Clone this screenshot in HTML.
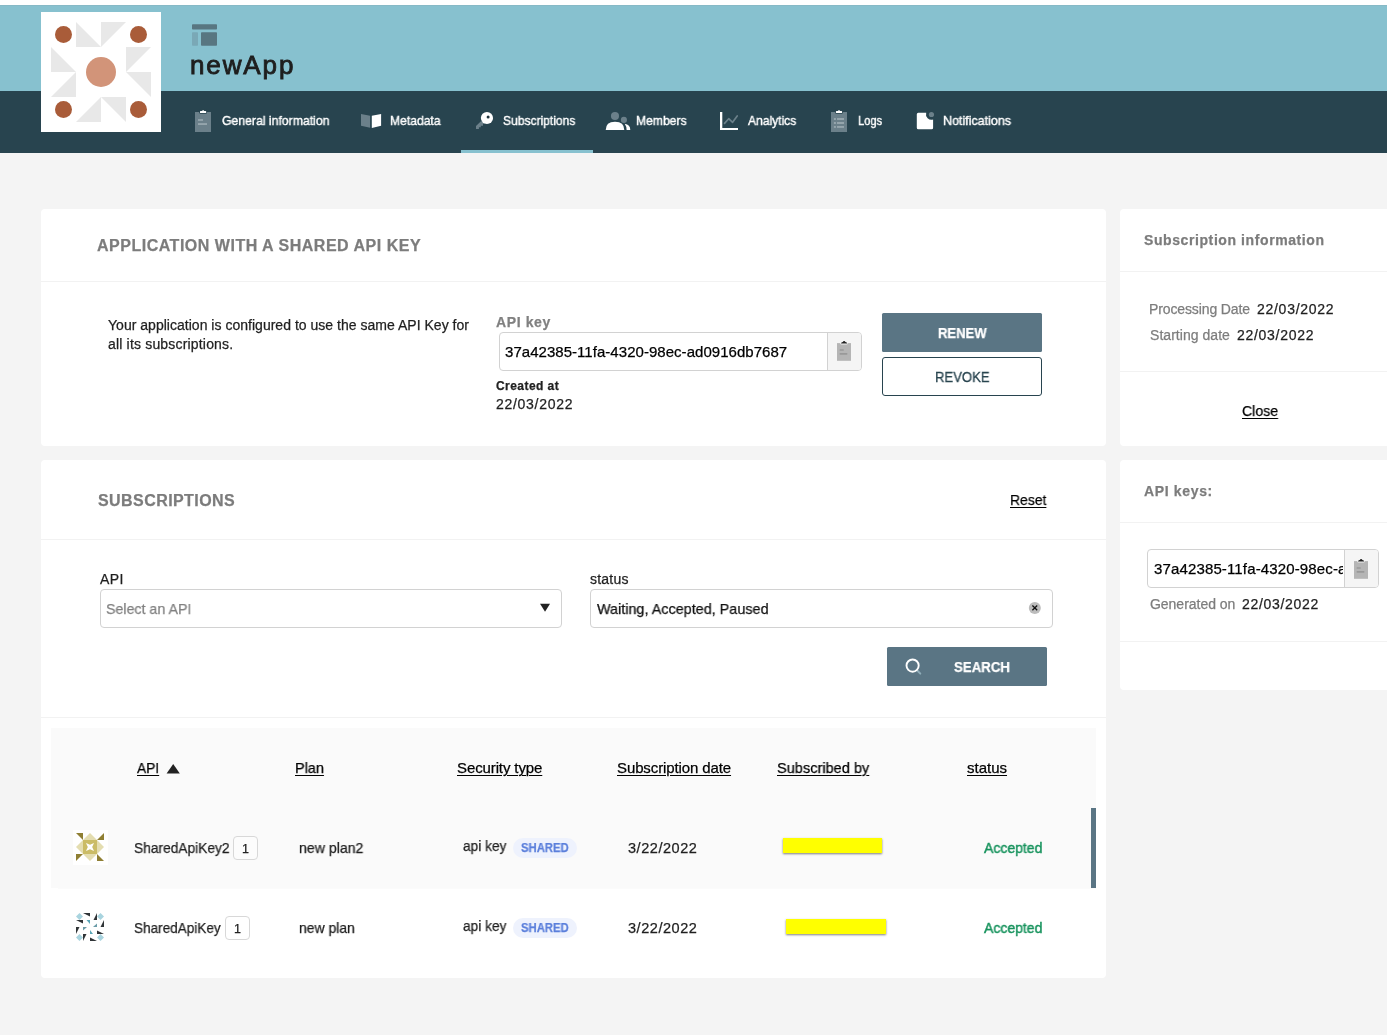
<!DOCTYPE html>
<html lang="en">
<head>
<meta charset="utf-8">
<title>newApp - Subscriptions</title>
<style>
*{box-sizing:border-box;margin:0;padding:0}
html,body{width:1387px;height:1035px;overflow:hidden;background:#f4f4f4;font-family:"Liberation Sans",sans-serif;color:#1f1f1f}
body{position:relative}
.abs{position:absolute}
.t{position:absolute;white-space:nowrap;line-height:1;font-size:14px;will-change:transform;-webkit-text-stroke:.25px}
.sx{transform-origin:0 50%}
.u{text-decoration:underline;text-decoration-thickness:1px;text-underline-offset:2px}
.card{background:#fff;border-radius:4px}
.hr{height:1px;background:#f2f2f2}
.inp{border:1px solid #d2d2d2;border-radius:4px;background:#fff}
.btnp{background:#5a7584;border-radius:1.500px}
.btno{background:#fff;border:1px solid #28444f;border-radius:3px}
.clip{background:#f5f5f5;border-left:1px solid #d2d2d2;border-radius:0 3px 3px 0}
.badge{border:1px solid #d8d8d8;border-radius:4px;background:#fcfcfc}
.shared{background:#eef2fd;border-radius:10px}
.yellow{background:#ffff00;box-shadow:0 1px 2px rgba(0,0,0,.5)}
</style>
</head>
<body>
<div class="abs" style="left:0;top:0;width:1387px;height:5px;background:#fff"></div>
<div class="abs" style="left:0;top:5px;width:1387px;height:86px;background:#87c1cf"></div>
<div class="abs" style="left:0;top:5px;width:1387px;height:1px;background:#86b9c6"></div>
<div class="abs" style="left:0;top:91px;width:1387px;height:62px;background:#28444f"></div>
<div class="abs" style="left:461px;top:150px;width:132px;height:3px;background:#87c1cf"></div>

<div class="abs" style="left:41px;top:12px;width:120px;height:120px;background:#fff">
<svg width="120" height="120" viewBox="0 0 120 120">
<g fill="#e8e8e8">
<polygon points="35,10 35,35 60,35"/>
<polygon points="60,10 85,10 60,35"/>
<polygon points="85,35 110,35 85,60"/>
<polygon points="85,60 110,60 110,85"/>
<polygon points="60,85 85,85 85,110"/>
<polygon points="60,85 60,110 35,110"/>
<polygon points="10,85 35,60 35,85"/>
<polygon points="10,35 10,60 35,60"/>
</g>
<g fill="#a95c39">
<circle cx="22.500" cy="22.500" r="8.500"/>
<circle cx="97.500" cy="22.500" r="8.500"/>
<circle cx="22.500" cy="97.500" r="8.500"/>
<circle cx="97.500" cy="97.500" r="8.500"/>
</g>
<circle cx="60" cy="60" r="15" fill="#d29479"/>
</svg>
</div>

<!-- app icon -->
<svg class="abs" style="left:191px;top:23px" width="28" height="24" viewBox="0 0 28 24">
<rect x="1" y="1.200" width="25" height="5.400" rx=".8" fill="#587681"/>
<rect x="1" y="9.200" width="6" height="13.600" rx=".8" fill="#7aa8b6"/>
<rect x="10" y="9.200" width="16" height="13.600" rx=".8" fill="#587681"/>
</svg>

<svg class="abs" style="left:0;top:100px" width="1387" height="40" viewBox="0 100 1387 40">
<!-- general information: clipboard -->
<rect x="195" y="112" width="16" height="20" fill="#6b808a"/>
<rect x="199.200" y="109.600" width="7.800" height="4.200" rx="1.200" fill="#28444f"/>
<path d="M200 113.100v-1.600q0-.6.600-.6h1.600q.3-.9.900-.9t.9.900h1.600q.6 0 .6.600v1.600z" fill="#fff"/>
<rect x="198" y="119.100" width="5" height="1.800" fill="#95a5ac"/>
<rect x="198" y="123.100" width="9" height="1.900" fill="#95a5ac"/>
<!-- metadata: book -->
<polygon points="361,113.900 370.100,115.700 370.100,127.800 361,125.700" fill="#6b808a"/>
<polygon points="371.800,115.800 381.100,113.900 381.100,125.700 371.800,127.900" fill="#fff"/>
<!-- subscriptions: key -->
<polygon points="481.200,120.900 476,126.100 476,128.900 478.900,128.900 478.900,127.300 480.800,127.300 480.800,125.700 483,125.700 483,124 485.500,123.500" fill="#6b808a"/>
<circle cx="486.950" cy="118" r="6.100" fill="#fff"/>
<circle cx="488.100" cy="117" r="1.500" fill="#1f333c"/>
<!-- members -->
<circle cx="615" cy="116.050" r="4.050" fill="#6b808a"/>
<circle cx="623.900" cy="119.900" r="3.050" fill="#6b808a"/>
<path d="M624.200 130.050h6.100q0-5.400-5.600-6.200q1.900 2.600 1.900 6.200z" fill="#fff"/>
<path d="M605.700 130.050q0-8.350 9.300-8.350t9.300 8.350z" fill="#fff"/>
<!-- analytics -->
<path d="M720 112.100h2.300v15.800h15.700v2.050h-18z" fill="#fff"/>
<polyline points="724.500,123.400 728.700,118.700 732.600,122.300 737.200,116" fill="none" stroke="#6b808a" stroke-width="1.700" stroke-linecap="round" stroke-linejoin="round"/>
<!-- logs -->
<rect x="831" y="112" width="16" height="20" fill="#6b808a"/>
<rect x="835.100" y="109.600" width="7.800" height="4.200" rx="1.200" fill="#28444f"/>
<path d="M835.900 113.100v-1.600q0-.6.600-.6h1.600q.3-.9.900-.9t.9.900h1.600q.6 0 .6.600v1.600z" fill="#fff"/>
<g fill="#95a5ac">
<rect x="833.900" y="118" width="2" height="2"/><rect x="837" y="118" width="7" height="2"/>
<rect x="833.900" y="122" width="2" height="2"/><rect x="837" y="122" width="7" height="2"/>
<rect x="833.900" y="126" width="2" height="1.900"/><rect x="837" y="126" width="7" height="1.900"/>
</g>
<!-- notifications -->
<path d="M918.300 112.750h7.900a5.500 5.500 0 0 0 6.900 6.800v8.150q0 1.500-1.500 1.500h-13.300q-1.500 0-1.500-1.500v-13.450q0-1.500 1.500-1.500z" fill="#fff"/>
<circle cx="931.450" cy="114.500" r="2.600" fill="#6b808a"/>
</svg>


<!-- card 1 -->
<div class="abs card" style="left:41px;top:209px;width:1065px;height:237px"></div>
<div class="abs hr" style="left:41px;top:281px;width:1065px"></div>
<div class="abs inp" style="left:499px;top:332px;width:363px;height:39px"></div>
<div class="abs clip" style="left:827px;top:333px;width:34px;height:37px"></div>
<div class="abs btnp" style="left:882px;top:313px;width:160px;height:39px"></div>
<div class="abs btno" style="left:882px;top:357px;width:160px;height:39px"></div>

<!-- card 2 -->
<div class="abs card" style="left:41px;top:460px;width:1065px;height:518px"></div>
<div class="abs hr" style="left:41px;top:539px;width:1065px"></div>
<div class="abs inp" style="left:100px;top:589px;width:462px;height:39px"></div>
<svg class="abs" style="left:539px;top:603px" width="12" height="10" viewBox="0 0 12 10"><polygon points="1,0.800 11,0.800 6,8.800" fill="#222"/></svg>
<div class="abs inp" style="left:590px;top:589px;width:463px;height:39px"></div>
<svg class="abs" style="left:1028px;top:601px" width="14" height="14" viewBox="0 0 14 14"><circle cx="6.800" cy="6.900" r="6" fill="#bcbcbc"/><path d="M4.400 4.500L9.200 9.300M9.200 4.500L4.400 9.300" stroke="#111" stroke-width="1.250"/></svg>
<div class="abs btnp" style="left:887px;top:647px;width:160px;height:39px"></div>
<svg class="abs" style="left:904px;top:657px" width="20" height="20" viewBox="0 0 20 20"><path d="M13 13.200L16.300 16.600" stroke="#8eacb8" stroke-width="2" stroke-linecap="round"/><circle cx="8.600" cy="8.600" r="6.100" fill="none" stroke="#fff" stroke-width="1.900"/></svg>
<div class="abs hr" style="left:41px;top:717px;width:1065px"></div>

<!-- table -->
<div class="abs" style="left:51px;top:728px;width:1045px;height:160px;background:#fafafa"></div>
<div class="abs" style="left:58px;top:888px;width:1038px;height:1px;background:#fbfbfb"></div>
<div class="abs" style="left:1091px;top:807.500px;width:5px;height:80px;background:#5a7584"></div>
<svg class="abs" style="left:166px;top:763px" width="14" height="11" viewBox="0 0 14 11"><polygon points="7.200,1 13.800,10.600 0.600,10.600" fill="#222"/></svg>

<!-- row 1 -->
<svg class="abs" style="left:73px;top:830px" width="35" height="35" viewBox="-3 -3 35 35">
<rect x="-3" y="-3" width="35" height="35" fill="#fff"/>
<polygon points="14,0 28,14 14,28 0,14" fill="#e4ddb0"/>
<rect x="7" y="7" width="14" height="14" fill="#cbbc66"/>
<g fill="#8f7f33"><polygon points="0,0 7,0 7,7"/><polygon points="28,0 28,7 21,7"/><polygon points="0,21 7,21 0,28"/><polygon points="21,21 21,28 28,28"/></g>
<polygon points="10,10 14,11.800 18,10 16.200,14 18,18 14,16.200 10,18 11.800,14" fill="#fff"/>
</svg>
<div class="abs badge" style="left:233px;top:836px;width:25px;height:24px"></div>
<div class="t" style="left:241.500px;top:842.500px;font-size:12.500px;color:#222">1</div>
<div class="abs shared" style="left:513px;top:838px;width:64px;height:19.500px"></div>
<div class="abs yellow" style="left:782.500px;top:838px;width:99px;height:15px"></div>

<!-- row 2 -->
<svg class="abs" style="left:76px;top:913px" width="28" height="28" viewBox="0 0 28 28">
<g fill="#a9d4df"><polygon points="3.500,0 7,3.500 3.500,7 0,3.500"/><polygon points="24.500,0 28,3.500 24.500,7 21,3.500"/><polygon points="3.500,21 7,24.500 3.500,28 0,24.500"/><polygon points="24.500,21 28,24.500 24.500,28 21,24.500"/></g>
<g fill="#303437"><polygon points="7,0 14,0 14,3.500"/><polygon points="21,0 21,7 17.500,7"/><polygon points="0,7 7,7 7,10.500"/><polygon points="28,7 28,14 24.500,14"/><polygon points="0,14 3.500,14 0,21"/><polygon points="21,17.500 21,21 28,21"/><polygon points="7,21 10.500,21 7,28"/><polygon points="14,24.500 14,28 21,28"/></g>
<g fill="#5aa6b8"><polygon points="10.500,7 14,7 14,11"/><polygon points="14,17 14,21 17,21"/></g>
<g fill="#6b9ca8"><polygon points="21,10.500 21,14 17,14"/><polygon points="7,14 11,14 7,17.500"/></g>
</svg>
<div class="abs badge" style="left:225px;top:916px;width:25px;height:24px;background:#fff"></div>
<div class="t" style="left:233.500px;top:922.500px;font-size:12.500px;color:#222">1</div>
<div class="abs shared" style="left:513px;top:918px;width:64px;height:19.500px"></div>
<div class="abs yellow" style="left:786px;top:918.500px;width:100px;height:15px"></div>

<!-- right panel 1 -->
<div class="abs card" style="left:1120px;top:209px;width:280px;height:237px"></div>
<div class="abs hr" style="left:1120px;top:271px;width:267px"></div>
<div class="abs hr" style="left:1120px;top:371px;width:267px"></div>

<!-- right panel 2 -->
<div class="abs card" style="left:1120px;top:460px;width:280px;height:230px"></div>
<div class="abs hr" style="left:1120px;top:522px;width:267px"></div>
<div class="abs hr" style="left:1120px;top:641px;width:267px"></div>
<div class="abs inp" style="left:1147px;top:549px;width:232px;height:39px"></div>
<div class="abs clip" style="left:1344px;top:550px;width:34px;height:37px"></div>
<div class="abs" style="left:1148px;top:550px;width:194.500px;height:37px;overflow:hidden"><div class="t" style="left:5.5px;top:11px;font-size:15px;letter-spacing:0.14px;color:#000">37a42385-11fa-4320-98ec-ad0916db7687</div></div>

<svg class="abs" style="left:834px;top:339px" width="20" height="24" viewBox="834 339 20 24">
<rect x="837" y="343.100" width="14" height="17.700" fill="#b5b5b5"/>
<rect x="840.200" y="340.300" width="7.600" height="4.200" rx="1.600" fill="#f5f5f5"/>
<path d="M841 343.600q0-1.500 1.800-1.600q.4-1 1.300-1t1.300 1q1.800.1 1.800 1.600z" fill="#222"/>
<rect x="839.600" y="349.300" width="4.200" height="1.500" rx=".5" fill="#999"/>
<rect x="839.600" y="353" width="7.800" height="1.700" rx=".6" fill="#999"/>
</svg>
<svg class="abs" style="left:1351px;top:557px" width="20" height="24" viewBox="834 339 20 24">
<rect x="837" y="343.100" width="14" height="17.700" fill="#b5b5b5"/>
<rect x="840.200" y="340.300" width="7.600" height="4.200" rx="1.600" fill="#f5f5f5"/>
<path d="M841 343.600q0-1.500 1.800-1.600q.4-1 1.300-1t1.300 1q1.800.1 1.800 1.600z" fill="#222"/>
<rect x="839.600" y="349.300" width="4.200" height="1.500" rx=".5" fill="#999"/>
<rect x="839.600" y="353" width="7.800" height="1.700" rx=".6" fill="#999"/>
</svg>

<div class="t" style="left:189.6px;top:51.6px;font-size:26px;letter-spacing:1.88px;color:#1e1e1e;-webkit-text-stroke:.85px #1e1e1e">newApp</div>
<div class="t nv sx" style="left:222.1px;top:114px;font-size:13px;transform:scaleX(0.9409);color:#fff;-webkit-text-stroke:.4px #fff">General information</div>
<div class="t nv sx" style="left:389.87px;top:114px;font-size:13px;transform:scaleX(0.9320);color:#fff;-webkit-text-stroke:.4px #fff">Metadata</div>
<div class="t nv sx" style="left:502.5px;top:114px;font-size:13px;transform:scaleX(0.9269);color:#fff;-webkit-text-stroke:.4px #fff">Subscriptions</div>
<div class="t nv sx" style="left:635.87px;top:114px;font-size:13px;transform:scaleX(0.9334);color:#fff;-webkit-text-stroke:.4px #fff">Members</div>
<div class="t nv sx" style="left:748px;top:114px;font-size:13px;transform:scaleX(0.9273);color:#fff;-webkit-text-stroke:.4px #fff">Analytics</div>
<div class="t nv sx" style="left:857.85px;top:114px;font-size:13px;transform:scaleX(0.8523);color:#fff;-webkit-text-stroke:.4px #fff">Logs</div>
<div class="t nv sx" style="left:943.04px;top:114px;font-size:13px;transform:scaleX(0.9615);color:#fff;-webkit-text-stroke:.4px #fff">Notifications</div>
<div class="t" style="left:97px;top:238px;font-size:16px;letter-spacing:0.51px;font-weight:bold;color:#7c7c7c">APPLICATION WITH A SHARED API KEY</div>
<div class="t" style="left:107.5px;top:318px;font-size:14px;letter-spacing:0.02px;color:#1f1f1f">Your application is configured to use the same API Key for</div>
<div class="t" style="left:107.5px;top:337px;font-size:14px;letter-spacing:0.18px;color:#1f1f1f">all its subscriptions.</div>
<div class="t" style="left:496.3px;top:315px;font-size:14px;letter-spacing:0.62px;font-weight:bold;color:#808080">API key</div>
<div class="t" style="left:505px;top:344px;font-size:15px;letter-spacing:0.04px;color:#000">37a42385-11fa-4320-98ec-ad0916db7687</div>
<div class="t" style="left:496.3px;top:380px;font-size:12px;letter-spacing:0.45px;font-weight:bold;color:#222">Created at</div>
<div class="t" style="left:496.3px;top:397.3px;font-size:14px;letter-spacing:0.71px;color:#1f1f1f">22/03/2022</div>
<div class="t sx" style="left:937.5px;top:326px;font-size:14px;transform:scaleX(0.9320);font-weight:bold;color:#fff">RENEW</div>
<div class="t sx" style="left:934.57px;top:370px;font-size:14px;transform:scaleX(0.9349);color:#28444f;-webkit-text-stroke:.3px #28444f">REVOKE</div>
<div class="t" style="left:97.5px;top:492.75px;font-size:16px;letter-spacing:0.43px;font-weight:bold;color:#7c7c7c">SUBSCRIPTIONS</div>
<div class="t u sx" style="left:1009.82px;top:492px;font-size:15px;transform:scaleX(0.9291);color:#000">Reset</div>
<div class="t" style="left:100px;top:571.75px;font-size:14px;letter-spacing:0.41px;color:#1f1f1f">API</div>
<div class="t" style="left:590.25px;top:571.75px;font-size:14px;letter-spacing:0.23px;color:#1f1f1f">status</div>
<div class="t sx" style="left:106.3px;top:600.75px;font-size:15px;transform:scaleX(0.9474);color:#808080">Select an API</div>
<div class="t sx" style="left:597px;top:600.75px;font-size:15px;transform:scaleX(0.9598);color:#111">Waiting, Accepted, Paused</div>
<div class="t sx" style="left:954.25px;top:660px;font-size:14px;transform:scaleX(0.9448);font-weight:bold;color:#fff">SEARCH</div>
<div class="t u sx" style="left:136.6px;top:760.3px;font-size:15px;transform:scaleX(0.9170);color:#000">API</div>
<div class="t u sx" style="left:295.44px;top:760.3px;font-size:15px;transform:scaleX(0.9624);color:#000">Plan</div>
<div class="t u" style="left:457px;top:760.3px;font-size:15px;letter-spacing:-0.11px;color:#000">Security type</div>
<div class="t u" style="left:616.75px;top:760.3px;font-size:15px;letter-spacing:-0.11px;color:#000">Subscription date</div>
<div class="t u sx" style="left:776.75px;top:760.3px;font-size:15px;transform:scaleX(0.9707);color:#000">Subscribed by</div>
<div class="t u" style="left:966.75px;top:760.3px;font-size:15px;letter-spacing:0px;color:#000">status</div>
<div class="t sx" style="left:133.9px;top:841.2px;font-size:14.5px;transform:scaleX(0.9474);color:#1f1f1f">SharedApiKey2</div>
<div class="t sx" style="left:298.9px;top:841.2px;font-size:14.5px;transform:scaleX(0.9736);color:#1f1f1f">new plan2</div>
<div class="t sx" style="left:463px;top:838.75px;font-size:14.5px;transform:scaleX(0.9423);color:#1f1f1f">api key</div>
<div class="t sx" style="left:521.25px;top:841.75px;font-size:12px;transform:scaleX(0.9411);font-weight:bold;color:#5b7fdb">SHARED</div>
<div class="t" style="left:628px;top:841px;font-size:14.5px;letter-spacing:0.54px;color:#1f1f1f">3/22/2022</div>
<div class="t sx" style="left:983.75px;top:841px;font-size:14.5px;transform:scaleX(0.9645);color:#17935d;-webkit-text-stroke:.45px #17935d">Accepted</div>
<div class="t sx" style="left:133.9px;top:921.2px;font-size:14.5px;transform:scaleX(0.9342);color:#1f1f1f">SharedApiKey</div>
<div class="t sx" style="left:298.9px;top:921.2px;font-size:14.5px;transform:scaleX(0.9607);color:#1f1f1f">new plan</div>
<div class="t sx" style="left:463px;top:918.75px;font-size:14.5px;transform:scaleX(0.9423);color:#1f1f1f">api key</div>
<div class="t sx" style="left:521.25px;top:921.75px;font-size:12px;transform:scaleX(0.9411);font-weight:bold;color:#5b7fdb">SHARED</div>
<div class="t" style="left:628px;top:921px;font-size:14.5px;letter-spacing:0.54px;color:#1f1f1f">3/22/2022</div>
<div class="t sx" style="left:983.75px;top:921px;font-size:14.5px;transform:scaleX(0.9645);color:#17935d;-webkit-text-stroke:.45px #17935d">Accepted</div>
<div class="t" style="left:1144.3px;top:233.2px;font-size:14px;letter-spacing:0.59px;font-weight:bold;color:#7c7c7c">Subscription information</div>
<div class="t" style="left:1148.9px;top:301.5px;font-size:14px;letter-spacing:-0.12px;color:#7d7d7d">Processing Date</div>
<div class="t" style="left:1257.3px;top:301.5px;font-size:14px;letter-spacing:0.72px;color:#1f1f1f">22/03/2022</div>
<div class="t" style="left:1149.9px;top:327.6px;font-size:14px;letter-spacing:0.04px;color:#7d7d7d">Starting date</div>
<div class="t" style="left:1237.3px;top:327.6px;font-size:14px;letter-spacing:0.71px;color:#1f1f1f">22/03/2022</div>
<div class="t u sx" style="left:1242.1px;top:402.7px;font-size:15px;transform:scaleX(0.9419);color:#000">Close</div>
<div class="t" style="left:1144.3px;top:483.9px;font-size:14px;letter-spacing:0.65px;font-weight:bold;color:#7c7c7c">API keys:</div>
<div class="t" style="left:1149.9px;top:596.9px;font-size:14px;letter-spacing:-0.03px;color:#7d7d7d">Generated on</div>
<div class="t" style="left:1241.6px;top:596.9px;font-size:14px;letter-spacing:0.7px;color:#1f1f1f">22/03/2022</div>
</body>
</html>
